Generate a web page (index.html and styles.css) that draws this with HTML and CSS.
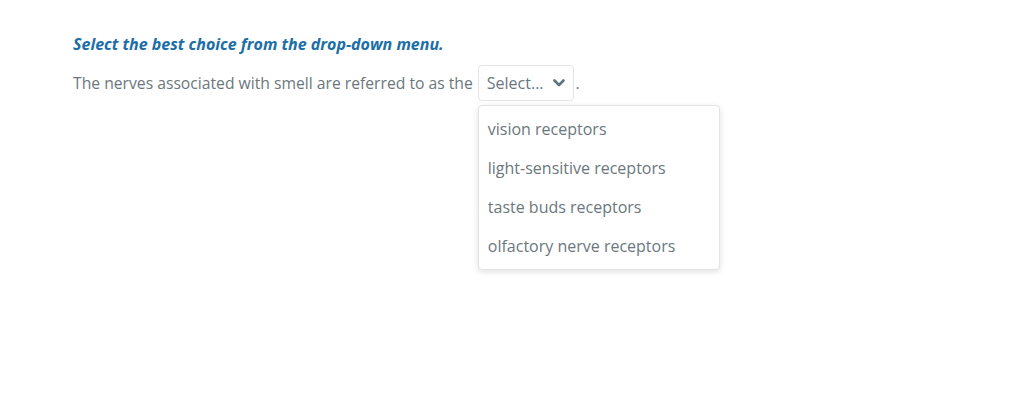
FILE: index.html
```html
<!DOCTYPE html>
<html lang="en">
<head>
  <meta charset="UTF-8">
  <title>Question</title>
  <link rel="stylesheet" href="styles.css">
</head>
<body>
  <div class="question">
    <div class="prompt">Select the best choice from the drop-down menu.</div>
    <div class="stem">
      <span class="stem-text">The nerves associated with smell are referred to as the</span>
      <div class="dropdown">
        <div class="select-box">
          <span>Select...</span>
          <svg class="chevron" width="12" height="8" viewBox="0 0 12 8"><path d="M1.5 1.5 L6 6 L10.5 1.5" fill="none" stroke="#5f7480" stroke-width="2.6" stroke-linecap="round" stroke-linejoin="round"/></svg>
        </div>
        <ul class="menu">
          <li>vision receptors</li>
          <li>light-sensitive receptors</li>
          <li>taste buds receptors</li>
          <li>olfactory nerve receptors</li>
        </ul>
      </div>
      <span class="period">.</span>
    </div>
  </div>
</body>
</html>
```

FILE: styles.css
```css
html, body {
  min-height: 410px;
}

body {
  margin: 0;
  font-family: 'Open Sans', sans-serif;
  background: #fff;
  color: #6b777d;
}

.question {
  padding: 34px 73px;
}

.prompt {
  margin: 0 0 11px;
  color: #1b6ea6;
  font-weight: bold;
  font-style: italic;
  font-size: 16px;
  line-height: 20px;
}

.stem {
  display: flex;
  align-items: center;
  font-size: 15.7px;
  height: 36px;
}

.stem-text {
  margin-right: 5px;
}

.period {
  margin-left: 2px;
}

.dropdown {
  position: relative;
}

.select-box {
  display: flex;
  align-items: center;
  gap: 9px;
  height: 34px;
  padding: 0 8px 0 8px;
  border: 1px solid #e2e4e6;
  border-radius: 4px;
  font-size: 16px;
}

.menu {
  position: absolute;
  top: 40px;
  left: 0;
  width: 240px;
  margin: 0;
  padding: 4px 0 3px;
  list-style: none;
  background: #fff;
  border: 1px solid #e2e4e6;
  border-radius: 4px;
  box-shadow: 0 2px 6px rgba(0, 0, 0, 0.12);
  font-size: 16px;
}

.menu li {
  padding: 0 9px;
  line-height: 39px;
  white-space: nowrap;
}
```
